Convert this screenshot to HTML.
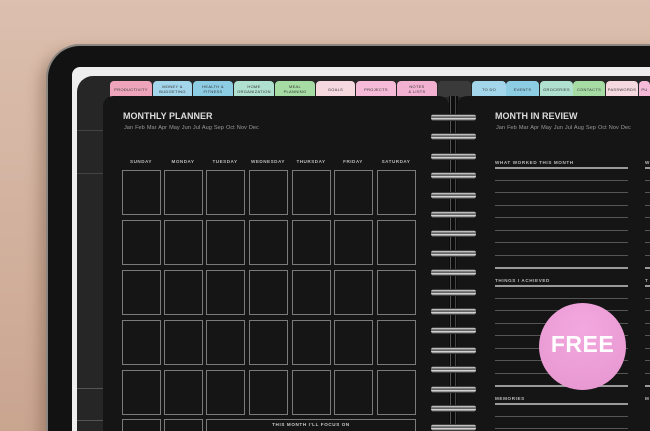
<!DOCTYPE html>
<html><head><meta charset="utf-8"><style>
*{margin:0;padding:0;box-sizing:border-box}
html,body{width:650px;height:431px;overflow:hidden}
body{background:#d4b3a0;font-family:"Liberation Sans",sans-serif}
#wrap{position:relative;width:650px;height:431px;overflow:hidden;background:linear-gradient(180deg,#dcbfae,#c9a590)}
.abs{position:absolute}
.bezel{left:46px;top:44px;width:620px;height:400px;background:#121212;border-radius:34px 0 0 0;border:2px solid #8d8782;border-right:0;border-bottom:0;box-shadow:-6px 6px 14px rgba(90,60,40,.35)}
.screen{left:72px;top:67px;width:578px;height:364px;background:#eeeeee;border-radius:8px 0 0 0}
.leather{left:77px;top:76px;width:573px;height:355px;background:#262626;border-radius:16px 0 0 0}
.page{background:#151515}
.tab{position:absolute;top:81px;height:16px;border-radius:4px 4px 0 0;font-size:4px;color:#333;text-align:center;line-height:5px;display:flex;align-items:center;justify-content:center;letter-spacing:.3px;white-space:nowrap;overflow:hidden}
.mono{color:#ddd;font-weight:bold;white-space:nowrap}
.months{color:#9a9a9a;font-size:5.6px;white-space:nowrap;word-spacing:-0.5px}
.day{position:absolute;top:159px;font-size:4.6px;color:#bbb;font-weight:bold;letter-spacing:.5px;width:40px;text-align:center}
.cell{position:absolute;border:1px solid #7a7a7a;width:39px;height:45px}
.ring{position:absolute;left:431px;width:45px;height:7px;border-radius:3px;background:linear-gradient(180deg,#000 0,#ddd 25%,#333 45%,#eee 65%,#111 100%)}
.ln{position:absolute;left:495px;width:133px;height:1px;background:#555}
.th{height:2px;background:#9a9a9a}
.hd{position:absolute;left:495px;font-size:4.6px;color:#bbb;font-weight:bold;letter-spacing:.6px;white-space:nowrap}
</style></head><body><div id="wrap">
<div class="abs bezel"></div>
<div class="abs screen"></div>
<div class="abs leather"></div>
<div class="abs" style="left:77px;top:130px;width:26px;height:1px;background:#444"></div>
<div class="abs" style="left:77px;top:173px;width:26px;height:1px;background:#444"></div>
<div class="abs" style="left:77px;top:388px;width:26px;height:1px;background:#555"></div>
<div class="abs" style="left:77px;top:420px;width:26px;height:1px;background:#555"></div>

<div class="tab" style="left:110px;width:42px;background:#eea5bb">PRODUCTIVITY</div>
<div class="tab" style="left:153px;width:39px;background:#a3d6ea">MONEY &amp;<br>BUDGETING</div>
<div class="tab" style="left:193px;width:40px;background:#8dcde4">HEALTH &amp;<br>FITNESS</div>
<div class="tab" style="left:234px;width:40px;background:#b0e0cf">HOME<br>ORGANIZATION</div>
<div class="tab" style="left:275px;width:40px;background:#a6dba4">MEAL<br>PLANNING</div>
<div class="tab" style="left:316px;width:39px;background:#f6d9df">GOALS</div>
<div class="tab" style="left:356px;width:40px;background:#f4bad8">PROJECTS</div>
<div class="tab" style="left:397px;width:40px;background:#f3b1d1">NOTES<br>&amp; LISTS</div>
<div class="tab" style="left:438px;width:33px;background:#3a3a3a"></div>
<div class="tab" style="left:472px;width:34px;background:#a3d6ea">TO DO</div>
<div class="tab" style="left:506px;width:33px;background:#8dcde4">EVENTS</div>
<div class="tab" style="left:540px;width:33px;background:#b0e0cf">GROCERIES</div>
<div class="tab" style="left:573px;width:32px;background:#a6dba4">CONTACTS</div>
<div class="tab" style="left:606px;width:32px;background:#f6d9df">PASSWORDS</div>
<div class="tab" style="left:639px;width:11px;background:#f4bad8">PU</div>

<div class="abs page" style="left:103px;top:96px;width:346px;height:335px;border-radius:10px 10px 0 0"></div>
<div class="abs" style="left:449px;top:96px;width:9px;height:335px;background:#0d0d0d"></div>
<div class="abs page" style="left:457px;top:96px;width:193px;height:335px;border-radius:10px 0 0 0"></div>

<div class="abs mono" style="left:123px;top:111px;font-size:9px">MONTHLY PLANNER</div>
<div class="abs months" style="left:124px;top:125px">Jan&nbsp; Feb&nbsp; Mar&nbsp; Apr&nbsp; May&nbsp; Jun&nbsp; Jul&nbsp; Aug&nbsp; Sep&nbsp; Oct&nbsp; Nov&nbsp; Dec</div>

<div class="day" style="left:121px">SUNDAY</div>
<div class="day" style="left:163px">MONDAY</div>
<div class="day" style="left:205px">TUESDAY</div>
<div class="day" style="left:248px">WEDNESDAY</div>
<div class="day" style="left:291px">THURSDAY</div>
<div class="day" style="left:333px">FRIDAY</div>
<div class="day" style="left:376px">SATURDAY</div>

<div id="grid"></div>
<div class="cell" style="left:206px;top:419px;width:210px;height:20px"></div>
<div class="abs" style="left:206px;top:422px;width:210px;text-align:center;font-size:4.6px;color:#ccc;font-weight:bold;letter-spacing:.6px">THIS MONTH I'LL FOCUS ON</div>

<div class="abs" style="left:450px;top:96px;width:1px;height:335px;background:#555"></div>
<div class="abs" style="left:455px;top:96px;width:1px;height:335px;background:#444"></div>
<div id="rings"></div>

<div class="abs mono" style="left:495px;top:111px;font-size:9px">MONTH IN REVIEW</div>
<div class="abs months" style="left:496px;top:125px">Jan&nbsp; Feb&nbsp; Mar&nbsp; Apr&nbsp; May&nbsp; Jun&nbsp; Jul&nbsp; Aug&nbsp; Sep&nbsp; Oct&nbsp; Nov&nbsp; Dec</div>
<div class="hd" style="top:160px">WHAT WORKED THIS MONTH</div>
<div class="hd" style="top:278px">THINGS I ACHIEVED</div>
<div class="hd" style="top:396px">MEMORIES</div>
<div class="hd" style="left:645px;top:160px">W</div>
<div class="hd" style="left:645px;top:278px">T</div>
<div class="hd" style="left:645px;top:396px">M</div>
<div id="lines"></div>

<div class="abs" style="left:539px;top:303px;width:87px;height:87px;border-radius:50%;background:radial-gradient(circle at 50% 30%,#f2a8de,#e695cf);"></div>
<div class="abs" style="left:539px;top:331px;width:87px;text-align:center;font-size:23px;font-weight:bold;color:#fff;letter-spacing:.5px">FREE</div>
</div>
<script>
var xs=[122,164,206,249,292,334,377],ys=[170,220,270,320,370],h='';
ys.forEach(function(y){xs.forEach(function(x){h+='<div class="cell" style="left:'+x+'px;top:'+y+'px"></div>'})});
h+='<div class="cell" style="left:122px;top:419px;height:12px;border-bottom:0"></div><div class="cell" style="left:164px;top:419px;height:12px;border-bottom:0"></div>';
document.getElementById('grid').innerHTML=h;
var r='';for(var i=0;i<17;i++){r+='<div class="ring" style="top:'+(114+19.4*i).toFixed(1)+'px"></div>'}
document.getElementById('rings').innerHTML=r;
var l='';
function sec(t){l+='<div class="ln th" style="top:'+t+'px"></div><div class="ln th" style="left:645px;width:5px;top:'+t+'px"></div>';
for(var k=1;k<=8;k++){var y=t+k*12.5;var thick=k==8;l+='<div class="ln'+(thick?' th':'')+'" style="top:'+y.toFixed(0)+'px"></div><div class="ln'+(thick?' th':'')+'" style="left:645px;width:5px;top:'+y.toFixed(0)+'px"></div>'}}
sec(167);sec(285);
l+='<div class="ln th" style="top:403px"></div><div class="ln" style="top:416px"></div><div class="ln" style="top:428px"></div>';
document.getElementById('lines').innerHTML=l;
</script>
</body></html>
